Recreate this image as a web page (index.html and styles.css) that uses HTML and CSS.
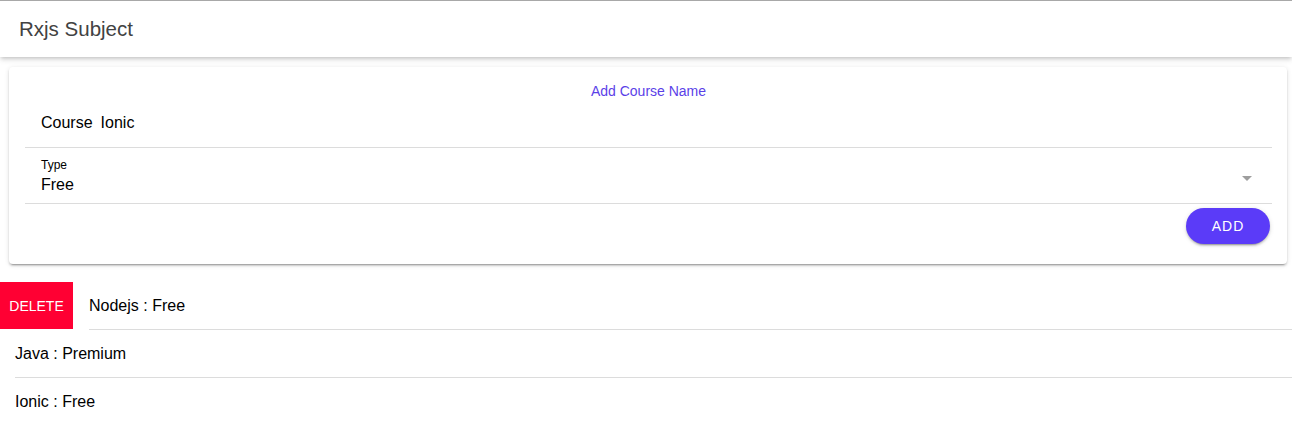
FILE: index.html
```html
<!DOCTYPE html>
<html lang="en">

<head>
    <meta charset="UTF-8">
    <meta name="viewport" content="width=device-width, initial-scale=1.0">
    <title>Rxjs Subject</title>
    <link rel="stylesheet" href="styles.css">
</head>

<body>
    <header class="toolbar">
        <div class="toolbar-title">Rxjs Subject</div>
    </header>

    <div class="content">
        <div class="card">
            <div class="card-title">Add Course Name</div>
            <div class="field-row">
                <span class="field-label">Course</span>
                <span class="field-value">Ionic</span>
            </div>
            <div class="field-row select-row">
                <div class="select-text">
                    <div class="select-label">Type</div>
                    <div class="select-value">Free</div>
                </div>
                <span class="select-arrow"></span>
            </div>
            <div class="card-actions">
                <button class="add-btn" type="button">ADD</button>
            </div>
        </div>

        <div class="course-list">
            <div class="course-item">
                <button class="delete-btn" type="button">DELETE</button>
                <div class="course-label">Nodejs : Free</div>
            </div>
            <div class="course-item">
                <div class="course-label">Java : Premium</div>
            </div>
            <div class="course-item">
                <div class="course-label">Ionic : Free</div>
            </div>
        </div>
    </div>
</body>

</html>
```

FILE: styles.css
```css
body {
    margin: 0;
    font-family: "Liberation Sans", Arial, sans-serif;
    color: #000;
    background: #fff;
    overflow: hidden;
}

.toolbar {
    height: 56px;
    border-top: 1px solid #a8a8a8;
    display: flex;
    align-items: center;
    padding-left: 19px;
    box-shadow: 0 2px 4px -1px rgba(0, 0, 0, 0.2), 0 4px 5px 0 rgba(0, 0, 0, 0.07);
    position: relative;
    z-index: 2;
}

.toolbar-title {
    font-size: 20.5px;
    color: #424242;
}

.card {
    margin: 10px 5px 0 9px;
    border-radius: 4px;
    background: #fff;
    box-shadow: 0 3px 1px -2px rgba(0, 0, 0, 0.2), 0 2px 2px 0 rgba(0, 0, 0, 0.14), 0 1px 5px 0 rgba(0, 0, 0, 0.12);
    padding: 0 15px 0 16px;
}

.card-title {
    padding-top: 15px;
    height: 17px;
    line-height: 18px;
    text-align: center;
    font-size: 14px;
    color: #5b3fe8;
}

.field-row {
    height: 48px;
    display: flex;
    align-items: center;
    padding-left: 16px;
    border-bottom: 1px solid #dcdcdc;
    font-size: 16px;
}

.field-label {
    margin-right: 8px;
}

.select-row {
    height: 55px;
    justify-content: space-between;
    padding-right: 16px;
}

.select-label {
    font-size: 12px;
    line-height: 14px;
    margin-top: 2px;
}

.select-value {
    font-size: 16px;
    line-height: 20px;
    margin-top: 3px;
}

.select-arrow {
    width: 0;
    height: 0;
    border-left: 5px solid transparent;
    border-right: 5px solid transparent;
    border-top: 5px solid #9e9e9e;
    margin-top: 6px;
    margin-right: 4px;
}

.card-actions {
    display: flex;
    justify-content: flex-end;
    padding: 4px 2px 20px 0;
}

.add-btn {
    width: 84px;
    height: 36px;
    border: 0;
    border-radius: 18px;
    background: #5b3bf8;
    color: #fff;
    font-family: inherit;
    font-size: 14px;
    letter-spacing: 1px;
    box-shadow: 0 3px 1px -2px rgba(0, 0, 0, 0.2), 0 2px 2px 0 rgba(0, 0, 0, 0.14), 0 1px 5px 0 rgba(0, 0, 0, 0.12);
}

.course-list {
    margin-top: 18px;
}

.course-item {
    display: flex;
    height: 48px;
}

.delete-btn {
    width: 73px;
    height: 47px;
    border: 0;
    background: #ff0033;
    color: #fff;
    font-family: inherit;
    font-size: 14px;
    padding: 0;
}

.course-label {
    flex: 1;
    display: flex;
    align-items: center;
    margin-left: 16px;
    font-size: 16px;
    border-bottom: 1px solid #dcdcdc;
}

.course-item + .course-item .course-label {
    margin-left: 15px;
}
```
